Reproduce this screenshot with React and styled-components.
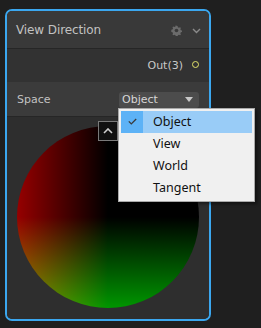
import React, { useState } from 'react';
import styled, { createGlobalStyle } from 'styled-components';

const GlobalStyle = createGlobalStyle`
  html, body {
    margin: 0;
    padding: 0;
    background: #1f1f1f;
  }
  body {
    font-family: "DejaVu Sans", Verdana, sans-serif;
  }
`;

const spaces = ['Object', 'View', 'World', 'Tangent'];

const App = () => {
  const [space, setSpace] = useState('Object');

  return (
    <Page>
      <GlobalStyle />
      <Card>
        <Header>
          <Title>View Direction</Title>
          <HeaderIcons>
            <svg width="11" height="11" viewBox="0 0 12 12">
              <path
                d="M6 0.8l1.2.3.3 1.3 1.2.6 1.2-.6.9.9-.6 1.2.6 1.2 1.3.3v1.6l-1.3.3-.6 1.2.6 1.2-.9.9-1.2-.6-1.2.6-.3 1.3H5.2l-.3-1.3-1.2-.6-1.2.6-.9-.9.6-1.2-.6-1.2-1.3-.3V5.2l1.3-.3.6-1.2-.6-1.2.9-.9 1.2.6 1.2-.6.3-1.3z"
                fill="#6b6b6b"
              />
              <circle cx="6" cy="6" r="2" fill="#393939" />
            </svg>
            <svg width="9" height="6" viewBox="0 0 9 6">
              <path d="M1 1l3.5 3.5L8 1" stroke="#8a8a8a" strokeWidth="1.4" fill="none" />
            </svg>
          </HeaderIcons>
        </Header>

        <OutputRow>
          <PortLabel>Out(3)</PortLabel>
          <Port />
        </OutputRow>

        <ControlRow>
          <ControlLabel>Space</ControlLabel>
          <SelectWrap>
            <Select>
              <span>{space}</span>
              <Caret />
            </Select>
            <Menu>
              {spaces.map((item) => (
                <MenuItem key={item} $active={item === space} onClick={() => setSpace(item)}>
                  <CheckCell $active={item === space}>
                    {item === space && (
                      <svg width="9" height="7" viewBox="0 0 9 7">
                        <path d="M0.8 3.4l2.5 2.5L8.2 1" stroke="#3a3a3a" strokeWidth="1.3" fill="none" />
                      </svg>
                    )}
                  </CheckCell>
                  <ItemText>{item}</ItemText>
                </MenuItem>
              ))}
            </Menu>
          </SelectWrap>
        </ControlRow>

        <Preview>
          <CollapseButton>
            <svg width="10" height="6" viewBox="0 0 10 6">
              <path d="M1 5l4-4 4 4" stroke="#cfcfcf" strokeWidth="1.6" fill="none" />
            </svg>
          </CollapseButton>
          <NormalSphere />
        </Preview>
      </Card>
    </Page>
  );
};

export default App;

const Page = styled.div`
  width: 261px;
  height: 328px;
  padding: 9px 0 0 5px;
  box-sizing: border-box;
`;

const Card = styled.div`
  width: 206px;
  height: 312px;
  box-sizing: border-box;
  border: 2px solid #3ba7ef;
  border-radius: 7px;
  background: #2e2e2e;
  display: flex;
  flex-direction: column;
`;

const Header = styled.div`
  height: 37px;
  flex-shrink: 0;
  display: flex;
  align-items: center;
  justify-content: space-between;
  padding: 0 8px 0 9px;
  background: #393939;
  border-bottom: 1px solid #262626;
  border-radius: 5px 5px 0 0;
`;

const Title = styled.span`
  color: #c2c2c2;
  font-size: 12px;
  letter-spacing: -0.1px;
`;

const HeaderIcons = styled.div`
  display: flex;
  align-items: center;
  gap: 10px;
  padding-top: 2px;
`;

const OutputRow = styled.div`
  height: 33px;
  flex-shrink: 0;
  display: flex;
  align-items: center;
  justify-content: flex-end;
  gap: 9px;
  padding-right: 10px;
  background: #323232;
`;

const PortLabel = styled.span`
  color: #c8c8c8;
  font-size: 11px;
`;

const Port = styled.span`
  width: 5px;
  height: 5px;
  border: 1.5px solid #e2e26a;
  border-radius: 50%;
  margin-top: -2px;
`;

const ControlRow = styled.div`
  height: 35px;
  flex-shrink: 0;
  display: flex;
  align-items: center;
  justify-content: space-between;
  padding: 1px 10px 0 10px;
  background: #3b3b3b;
  border-bottom: 1px solid #262626;
  box-sizing: border-box;
`;

const ControlLabel = styled.span`
  color: #c2c2c2;
  font-size: 11px;
`;

const SelectWrap = styled.div`
  position: relative;
`;

const Select = styled.div`
  width: 80px;
  height: 16px;
  box-sizing: border-box;
  display: flex;
  align-items: center;
  justify-content: space-between;
  padding: 0 6px 0 3px;
  background: #4c4c4c;
  border-radius: 3px;
  color: #d6d6d6;
  font-size: 11px;
`;

const Caret = styled.span`
  width: 0;
  height: 0;
  border-left: 4px solid transparent;
  border-right: 4px solid transparent;
  border-top: 5px solid #c8c8c8;
`;

const Menu = styled.div`
  position: absolute;
  left: -1px;
  top: 100%;
  width: 137px;
  box-sizing: border-box;
  padding: 2px;
  background: #f0f0f0;
  border: 1px solid #a9a9a9;
  box-shadow: 2px 2px 3px rgba(0, 0, 0, 0.45);
  z-index: 10;
`;

const MenuItem = styled.div`
  height: 22px;
  display: flex;
  align-items: center;
  background: ${(p) => (p.$active ? '#99ccf7' : 'transparent')};
  cursor: default;
`;

const CheckCell = styled.span`
  width: 22px;
  height: 22px;
  display: flex;
  align-items: center;
  justify-content: center;
  background: ${(p) => (p.$active ? '#5db2f6' : 'transparent')};
`;

const ItemText = styled.span`
  margin-left: 10px;
  color: #111;
  font-family: "Noto Sans", "Open Sans", sans-serif;
  font-size: 12.5px;
`;

const Preview = styled.div`
  position: relative;
  flex: 1;
  display: flex;
  justify-content: center;
  padding-top: 9px;
  background: #2e2e2e;
  border-radius: 0 0 5px 5px;
`;

const CollapseButton = styled.div`
  position: absolute;
  left: 91px;
  top: 4px;
  width: 20px;
  height: 20px;
  box-sizing: border-box;
  display: flex;
  align-items: center;
  justify-content: center;
  background: #111;
  border: 1px solid #7a7a7a;
  z-index: 2;
`;

const NormalSphere = styled.div`
  width: 182px;
  height: 182px;
  border-radius: 50%;
  background:
    linear-gradient(to right, rgb(150, 0, 0) 0%, rgb(0, 0, 0) 50%, rgb(0, 0, 0) 100%),
    linear-gradient(to bottom, rgb(0, 0, 0) 0%, rgb(0, 0, 0) 50%, rgb(0, 150, 0) 100%);
  background-blend-mode: screen;
`;
